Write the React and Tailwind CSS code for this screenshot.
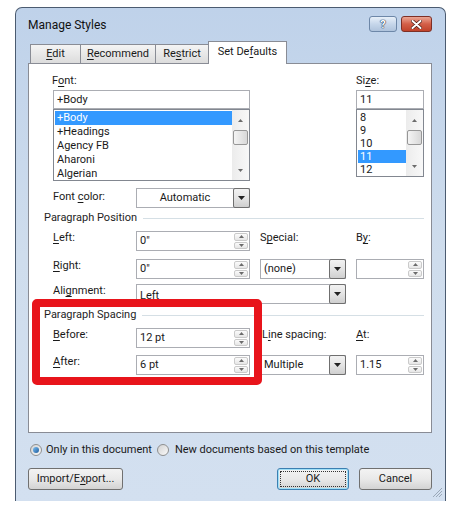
import React from "react";

const Mn = ({ text, k }) => (
  <span>
    {text.slice(0, k)}
    <span className="underline decoration-1 underline-offset-[2px]">{text[k]}</span>
    {text.slice(k + 1)}
  </span>
);

const Tri = ({ up, small }) => (
  <svg width={small ? 5 : 7} height={small ? 3 : 4} viewBox="0 0 7 4">
    <path d={up ? "M0 4 L3.5 0 L7 4Z" : "M0 0 L7 0 L3.5 4Z"} fill={small ? "#6b6b6b" : "#222"} />
  </svg>
);

const Spin = () => (
  <div className="flex w-[16px] flex-col gap-px p-px">
    <div className="flex flex-1 items-center justify-center rounded-[2px] border border-[#cacaca] bg-gradient-to-b from-[#fbfbfb] to-[#e6e6e6]">
      <Tri up small />
    </div>
    <div className="flex flex-1 items-center justify-center rounded-[2px] border border-[#cacaca] bg-gradient-to-b from-[#fbfbfb] to-[#e6e6e6]">
      <Tri small />
    </div>
  </div>
);

const DropBtn = () => (
  <div className="-my-px -mr-px flex w-[17px] items-center justify-center rounded-[2px] border border-[#6f6f6f] bg-gradient-to-b from-[#f2f2f2] via-[#e4e4e4] to-[#cfcfcf]">
    <Tri />
  </div>
);

const Field = ({ w, children, spin, drop, center }) => (
  <div className={`flex h-[20px] border border-[#abadb3] bg-white ${w}`}>
    <div className={`flex flex-1 items-center px-[3px] ${center ? "justify-center" : ""}`}>{children}</div>
    {spin && <Spin />}
    {drop && <DropBtn />}
  </div>
);

const Scroll = () => (
  <div className="flex w-[17px] flex-col bg-gradient-to-r from-[#ececec] to-[#f8f8f8]">
    <div className="flex h-[20px] items-center justify-center">
      <Tri up small />
    </div>
    <div className="mx-[1px] h-[15px] rounded-[2px] border border-[#979797] bg-gradient-to-r from-[#f4f4f4] to-[#d8d8d8]" />
    <div className="flex-1" />
    <div className="flex h-[20px] items-center justify-center">
      <Tri small />
    </div>
  </div>
);

const List = ({ items, sel, h, row }) => (
  <div className={`flex border border-[#828790] bg-white ${h}`}>
    <div className="flex-1 overflow-hidden pl-px pt-px">
      {items.map((it, i) => (
        <div key={it} className={`${row} pl-[2px] ${i === sel ? "bg-[#3399ff] text-white" : ""}`}>
          {it}
        </div>
      ))}
    </div>
    <Scroll />
  </div>
);

const Header = ({ children }) => (
  <div className="flex h-[14px] items-center pl-[15px] pr-[7px]">
    <span className="text-[#1e1e1e]">{children}</span>
    <div className="ml-[6px] h-px flex-1 bg-[#d5dfe5]" />
  </div>
);

const Radio = ({ on }) => (
  <div className="flex h-[12px] w-[12px] items-center justify-center rounded-full border border-[#8e8f8f] bg-gradient-to-br from-[#d2d2d2] to-[#fafafa]">
    {on && <div className="h-[6px] w-[6px] rounded-full bg-gradient-to-br from-[#7cc0f4] to-[#1d5c9c]" />}
  </div>
);

const Btn = ({ w, children, focus }) => (
  <div
    className={`flex h-[22px] rounded-[3px] border p-[2px] ${
      focus ? "border-[#3c7fb1] shadow-[inset_0_0_0_1px_#9fe0f8]" : "border-[#707070]"
    } bg-gradient-to-b from-[#f3f3f3] via-[#e9e9e9] to-[#d3d3d3] ${w}`}
  >
    <div
      className={`flex flex-1 items-center justify-center border ${
        focus ? "border-dotted border-[#333]" : "border-transparent"
      }`}
    >
      {children}
    </div>
  </div>
);

const Tab = ({ w, children, active }) =>
  active ? (
    <div
      className={`relative z-10 -mb-px flex h-[23px] items-center justify-center border border-b-0 border-[#898c95] bg-white pb-[2px] ${w}`}
    >
      {children}
    </div>
  ) : (
    <div
      className={`-mr-px flex h-[19px] items-center justify-center border border-b-0 border-[#898c95] bg-gradient-to-b from-[#f4f4f4] to-[#dcdcdc] ${w}`}
    >
      {children}
    </div>
  );

export default function App() {
  return (
    <div className="h-[512px] w-[458px] bg-white pl-[15px] pt-[7px] font-['Roboto','Liberation_Sans',sans-serif] text-[11px] leading-[14px] text-[#1a1a1a]">
      <div className="relative flex h-[494px] w-[431px] flex-col rounded-t-[7px] border border-b-0 border-[#4b5b70] bg-gradient-to-b from-[#bfd2ea] via-[#cfdded] to-[#d3e0f0] pl-[12px] pr-[13px]">
        <div className="flex h-[33px] items-center">
          <span className="text-[12px] text-[#111]">Manage Styles</span>
          <div className="ml-auto flex gap-[4px] pb-[1px]">
            <div className="flex h-[16px] w-[28px] items-center justify-center rounded-[3px] border border-[#6d87a8] bg-gradient-to-b from-[#e8f0f9] via-[#c6d6ea] to-[#afc3dc] text-[11px] font-bold leading-none text-white [text-shadow:0_0_1px_#1f3556,0_0_1px_#1f3556,0_0_1px_#1f3556]">
              ?
            </div>
            <div className="flex h-[16px] w-[31px] items-center justify-center rounded-[3px] border border-[#7e2f25] bg-gradient-to-b from-[#eaa594] via-[#d35f48] to-[#c0422a]">
              <svg width="11" height="9" viewBox="0 0 11 9">
                <path d="M1.5 1 L9.5 8 M9.5 1 L1.5 8" stroke="#4a1a12" strokeWidth="3.4" strokeLinecap="round" />
                <path d="M1.5 1 L9.5 8 M9.5 1 L1.5 8" stroke="#fff" strokeWidth="2" strokeLinecap="round" />
              </svg>
            </div>
          </div>
        </div>

        <div className="flex h-[22px] items-end pl-[2px]">
          <Tab w="w-[51px]">
            <Mn text="Edit" k={0} />
          </Tab>
          <Tab w="w-[76px]">
            <Mn text="Recommend" k={0} />
          </Tab>
          <Tab w="w-[54px]">
            <Mn text="Restrict" k={2} />
          </Tab>
          <Tab w="w-[79px]" active>
            <Mn text="Set Defaults" k={6} />
          </Tab>
        </div>

        <div className="relative h-[370px] w-[404px] border border-[#898c95] bg-white">
          <div className="flex pl-[24px] pt-[10px]">
            <div className="flex w-[197px] flex-col">
              <div className="-ml-px mb-[2px]">
                <Mn text="Font:" k={1} />
              </div>
              <div className="flex h-[19px] items-center border border-[#abadb3] px-[3px]">+Body</div>
              <List
                h="h-[72px]"
                row="h-[14px] leading-[13px]"
                sel={0}
                items={["+Body", "+Headings", "Agency FB", "Aharoni", "Algerian"]}
              />
            </div>
            <div className="ml-[106px] flex w-[68px] flex-col">
              <div className="mb-[2px]">
                <Mn text="Size:" k={2} />
              </div>
              <div className="flex h-[19px] items-center border border-[#abadb3] px-[3px]">11</div>
              <List h="h-[68px]" row="h-[13px] leading-[13px]" sel={3} items={["8", "9", "10", "11", "12"]} />
            </div>
          </div>

          <div className="mt-[7px] flex h-[20px] pl-[24px]">
            <div className="w-[83px] pt-[2px]">
              <Mn text="Font color:" k={5} />
            </div>
            <Field w="w-[114px]" drop center>
              Automatic
            </Field>
          </div>

          <div className="mt-[3px]">
            <Header>Paragraph Position</Header>
          </div>

          <div className="mt-[6px] flex h-[20px] pl-[24px]">
            <div className="w-[83px]">
              <Mn text="Left:" k={0} />
            </div>
            <Field w="w-[114px]" spin>
              0"
            </Field>
            <div className="ml-[10px] w-[86px]">
              <Mn text="Special:" k={1} />
            </div>
            <div className="ml-[10px]">
              <Mn text="By:" k={1} />
            </div>
          </div>

          <div className="mt-[8px] flex h-[20px] pl-[24px]">
            <div className="w-[83px]">
              <Mn text="Right:" k={0} />
            </div>
            <Field w="w-[114px]" spin>
              0"
            </Field>
            <div className="ml-[10px]">
              <Field w="w-[86px]" drop>
                (none)
              </Field>
            </div>
            <div className="ml-[10px]">
              <Field w="w-[68px]" spin />
            </div>
          </div>

          <div className="mt-[5px] flex h-[20px] pl-[24px]">
            <div className="w-[83px]">
              <Mn text="Alignment:" k={3} />
            </div>
            <Field w="w-[210px]" drop>
              <span className="pt-[4px]">Left</span>
            </Field>
          </div>

          <div className="mt-[4px]">
            <Header>Paragraph Spacing</Header>
          </div>

          <div className="mt-[6px] flex h-[20px] pl-[24px]">
            <div className="w-[83px]">
              <Mn text="Before:" k={0} />
            </div>
            <Field w="w-[114px]" spin>
              12 pt
            </Field>
            <div className="ml-[12px] w-[84px]">
              <Mn text="Line spacing:" k={1} />
            </div>
            <div className="ml-[10px]">
              <Mn text="At:" k={0} />
            </div>
          </div>

          <div className="mt-[7px] flex h-[20px] pl-[24px]">
            <div className="w-[83px]">
              <Mn text="After:" k={0} />
            </div>
            <Field w="w-[114px]" spin>
              6 pt
            </Field>
            <div className="ml-[10px]">
              <Field w="w-[86px]" drop>
                Multiple
              </Field>
            </div>
            <div className="ml-[10px]">
              <Field w="w-[68px]" spin>
                1.15
              </Field>
            </div>
          </div>

          <div className="pointer-events-none absolute left-[3px] top-[235px] h-[86px] w-[230px] rounded-[5px] border-[8px] border-[#e8141b]" />
        </div>

        <div className="mt-[10px] flex h-[14px] items-center pl-[2px]">
          <Radio on />
          <span className="ml-[4px]">Only in this document</span>
          <div className="ml-[5px]">
            <Radio />
          </div>
          <span className="ml-[6px]">New documents based on this template</span>
        </div>

        <div className="mt-[11px] flex">
          <Btn w="w-[95px]">
            <Mn text="Import/Export..." k={8} />
          </Btn>
          <div className="ml-auto">
            <Btn w="w-[72px]" focus>
              OK
            </Btn>
          </div>
          <div className="ml-[10px]">
            <Btn w="w-[73px]">Cancel</Btn>
          </div>
        </div>

        <svg className="absolute bottom-[3px] right-[2px]" width="12" height="12" viewBox="0 0 12 12">
          <path d="M11 2 L2 11 M11 5 L5 11 M11 8 L8 11" stroke="#9aa8b8" strokeWidth="1" />
        </svg>
      </div>
    </div>
  );
}
